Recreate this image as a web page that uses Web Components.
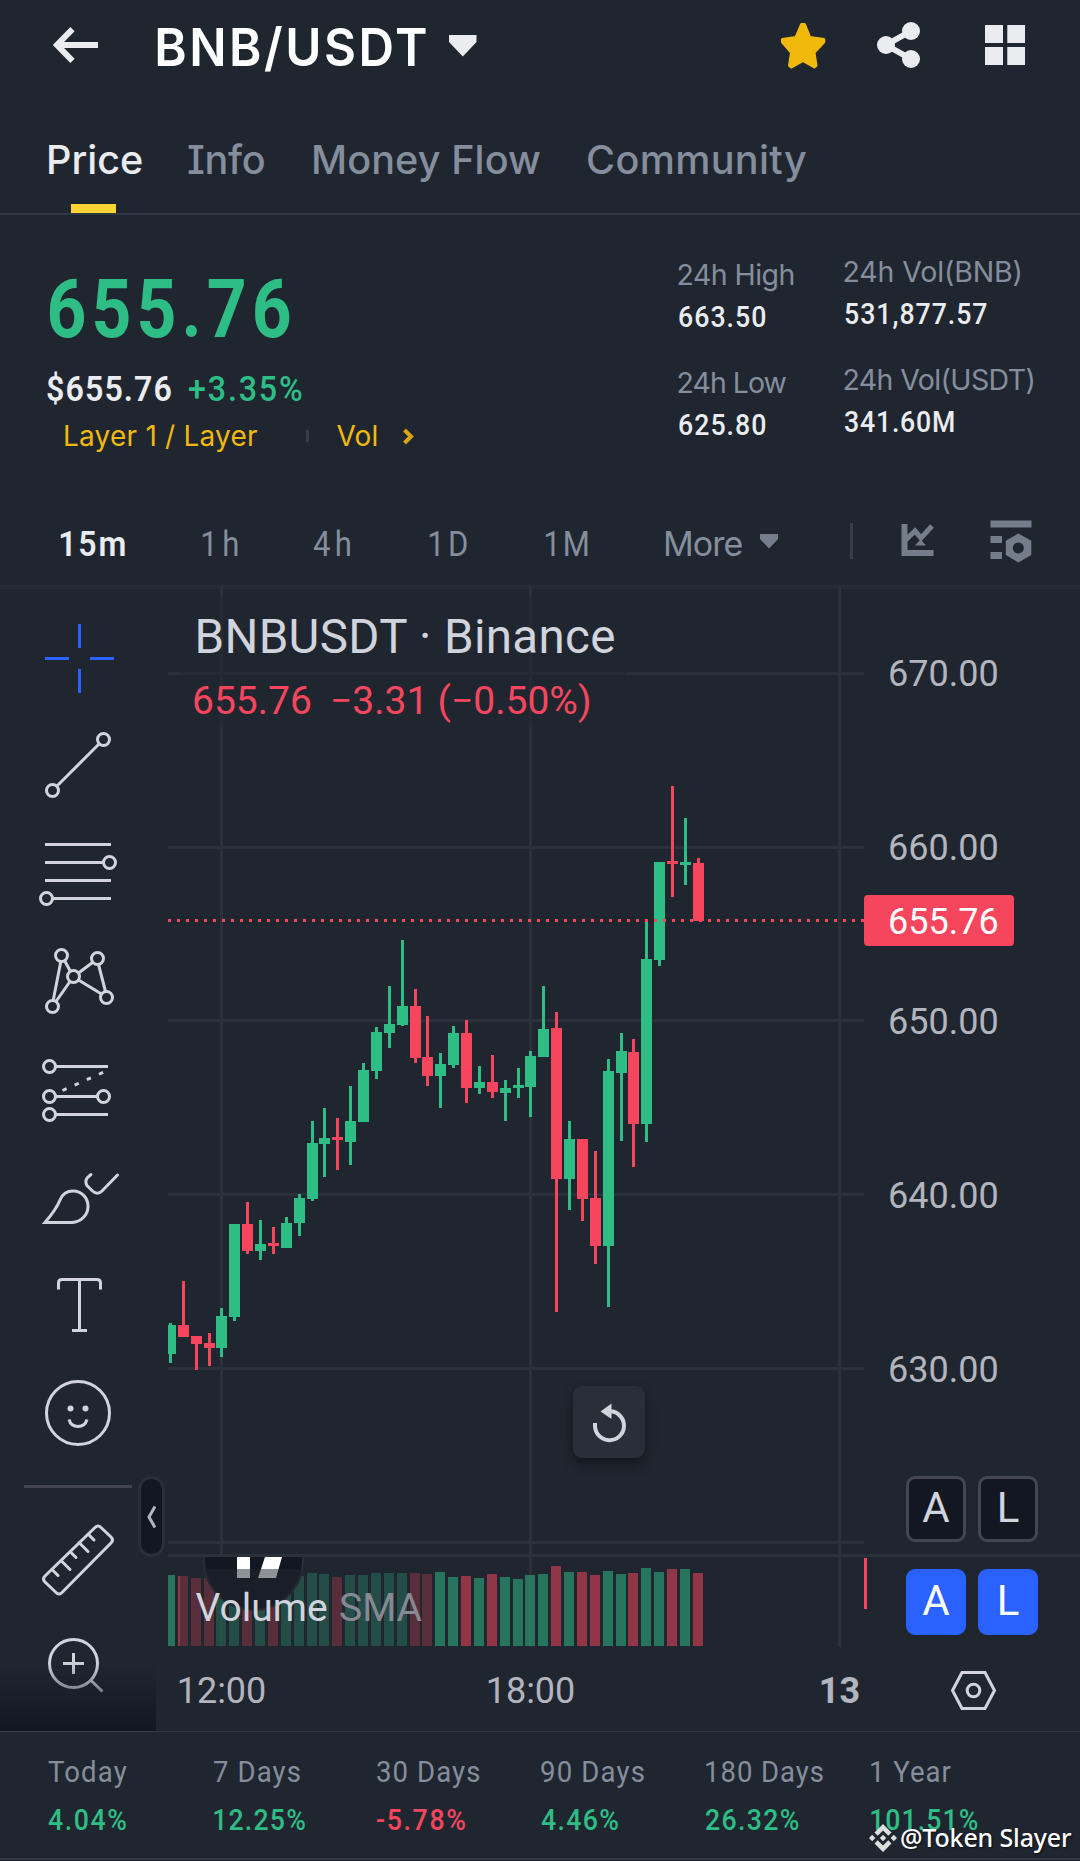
<!DOCTYPE html>
<html lang="en">
<head>
<meta charset="utf-8">
<title>BNB/USDT</title>
<style>
html,body{margin:0;padding:0;background:#202630}
body{width:1080px;height:1861px;overflow:hidden;font-family:Inter,"Noto Sans",sans-serif;color:#eaecef}
</style>
</head>
<body>
<trading-page></trading-page>
<script>
const ctx = document.createElement('canvas').getContext('2d');

/* A single line of text whose ink spans exactly `w` pixels; `sx` condenses the glyphs. */
class FitText extends HTMLElement {
  connectedCallback() {
    if (this.shadowRoot) return;
    const root = this.attachShadow({mode: 'open'});
    root.innerHTML = `<style>:host{display:block;flex:none;white-space:pre}
      span{display:inline-block;transform-origin:0 50%}</style><span><slot></slot></span>`;
    const w = +this.getAttribute('w'), sx = +(this.getAttribute('sx') || 1);
    const cs = getComputedStyle(this), text = this.textContent;
    ctx.font = `${cs.fontWeight} ${cs.fontSize} ${cs.fontFamily}`;
    const m = ctx.measureText(text);
    const ink = m.actualBoundingBoxLeft + m.actualBoundingBoxRight;
    const span = root.querySelector('span');
    this.style.width = w + 'px';
    span.style.letterSpacing = ((w / sx - ink) / Math.max(1, text.length - 1)) + 'px';
    span.style.transform = `translateX(${m.actualBoundingBoxLeft * sx}px) scaleX(${sx})`;
  }
}
customElements.define('fit-text', FitText);

const define = (name, html) => customElements.define(name, class extends HTMLElement {
  connectedCallback() {
    if (this.shadowRoot) return;
    const t = document.createElement('template');
    t.innerHTML = html;
    this.attachShadow({mode: 'open'}).appendChild(t.content.cloneNode(true));
  }
});

define('app-header', `
<style>
:host{display:flex;align-items:center;height:94px;box-sizing:border-box;padding:0 55px 0 52px}
svg{display:block;flex:none}
fit-text{font-size:52.3px;font-weight:600;line-height:94px;color:#fff;margin-left:58px}
.caret{margin:0 auto 2px 23px}
.share{margin:0 64px 5px 51px}
.grid,.star,.back{margin-bottom:5px}
</style>
<svg class="back" width="47" height="40" viewBox="52 25 47 40" fill="none" stroke="#eaecef" stroke-width="6"><path d="M98 45H58M72.5 29.2L57 45L72.5 60.8"/></svg>
<fit-text w="269" sx=".94">BNB/USDT</fit-text>
<svg class="caret" width="28" height="22" viewBox="449.500 35 28 22" fill="#eaecef"><path d="M449.500 35h27.500v7l-13.700 14.500l-13.800-14.500z"/></svg>
<svg class="star" width="46" height="48" viewBox="780 21 46 48" fill="#f0b90b" stroke="#f0b90b" stroke-width="3" stroke-linejoin="round"><path d="M801.500 24.500h3L809.800 37.500L823.800 39.500V42L814 52.500L816 65.500L814.500 67L803 60.500L791.500 67L789.500 65.500L791.500 52.500L782.500 42V39.500L796 37.500Z"/></svg>
<svg class="share" width="44" height="48" viewBox="877 21 44 48" fill="#eaecef"><circle cx="886" cy="45" r="9"/><circle cx="911" cy="31" r="9"/><circle cx="911" cy="59" r="9"/><path d="M911 31L886 45L911 59" fill="none" stroke="#eaecef" stroke-width="6"/></svg>
<svg class="grid" width="40" height="40" fill="#eaecef"><path d="M0 0h18v18H0zM22.300 0h17.700v18H22.300zM0 22h18v18H0zM22.300 22h17.700v18H22.300z"/></svg>
`);

define('page-tabs', `
<style>
:host{display:flex;gap:48px;height:121px;box-sizing:border-box;padding:46px 0 0 49px;border-bottom:2px solid #323843}
.tab{font-size:39.6px;font-weight:500;line-height:40px;color:#848e9c;height:73px;display:flex;flex-direction:column;align-items:center;justify-content:space-between}
.on{color:#eaecef}
.on::after{content:"";width:45px;height:9px;background:#fcd535;margin-right:4px}
.info{font-feature-settings:"cv08";margin-right:8.500px}
</style>
<div class="tab on"><fit-text w="93">Price</fit-text></div>
<div class="tab info"><fit-text w="67.500">Info</fit-text></div>
<div class="tab"><fit-text w="226">Money Flow</fit-text></div>
<div class="tab"><fit-text w="218">Community</fit-text></div>
`);

define('stat-item', `
<style>
:host{display:flex;flex-direction:column;line-height:42px;height:108px}
::slotted(*){display:block}
.l{color:#848e9c;font-size:28.500px}
.v{color:#eaecef;font:500 29px/42px Roboto,sans-serif}
</style>
<div class="l"><slot name="label"></slot></div><div class="v"><slot></slot></div>
`);

define('price-summary', `
<style>
:host{display:flex;height:285px;box-sizing:border-box;padding-top:34px}
.left{width:631px;padding-left:48px;box-sizing:border-box}
.big{font:700 82px/121px Roboto,sans-serif;color:#2ebd85;padding-left:2px}
.row{display:flex;align-items:center}
.usd{font:600 35px/39px Roboto,sans-serif;gap:18px;margin-left:-1px}
.up{color:#2ebd85;font-weight:500}
.tags{font-size:28px;line-height:54px;color:#f0b90b;padding-left:17px}
.tags i{width:3px;height:12px;background:#363c48;margin:0 28px 0 48.500px}
.tags svg{margin-left:26px}
.c1{padding:4.500px 0 0 47.500px;width:213.500px;box-sizing:border-box}
.c2{padding:1.500px 0 0}
</style>
<div class="left">
 <div class="big"><fit-text w="240" sx=".85">655.76</fit-text></div>
 <div class="row usd"><fit-text w="124" sx=".92">$655.76</fit-text><fit-text class="up" w="113" sx=".92">+3.35%</fit-text></div>
 <div class="row tags"><fit-text w="192">Layer 1 / Layer</fit-text><i></i><fit-text w="40">Vol</fit-text>
 <svg width="12" height="17" fill="none" stroke="#d9a513" stroke-width="4"><path d="M1.500 2L8 8.500L1.500 15"/></svg></div>
</div>
<div class="c1">
 <stat-item><fit-text slot="label" w="115">24h High</fit-text><fit-text w="86" sx=".92">663.50</fit-text></stat-item>
 <stat-item><fit-text slot="label" w="108">24h Low</fit-text><fit-text w="86" sx=".92">625.80</fit-text></stat-item>
</div>
<div class="c2">
 <stat-item><fit-text slot="label" w="176">24h Vol(BNB)</fit-text><fit-text w="142" sx=".92">531,877.57</fit-text></stat-item>
 <stat-item><fit-text slot="label" w="189">24h Vol(USDT)</fit-text><fit-text w="109" sx=".92">341.60M</fit-text></stat-item>
</div>
`);

define('interval-bar', `
<style>
:host{display:flex;align-items:center;height:85px;box-sizing:border-box;padding:3px 48px 0 59.500px;font:400 34.500px/82px Roboto,sans-serif;color:#848e9c}
.list{display:flex;gap:77.500px;flex:none}
.on{color:#eaecef;font-weight:600}
.h4{margin:0 1.500px 0 -1.500px}
.more{display:flex;align-items:center;gap:17px;font:400 34px/82px Inter,sans-serif}
i{width:3px;height:36px;background:#363c48;margin:0 auto 6px 72px}
svg{flex:none;display:block;margin-bottom:6px}
</style>
<div class="list"><fit-text class="on" w="64.500" sx=".93">15m</fit-text><fit-text w="35.500" sx=".9">1h</fit-text><fit-text class="h4" w="37" sx=".9">4h</fit-text><fit-text w="38" sx=".9">1D</fit-text><fit-text w="43" sx=".9">1M</fit-text>
<div class="more"><fit-text w="77.500">More</fit-text><svg width="18" height="15" fill="#767d8a"><path d="M0 0h18v5L9 14.500L0 5z"/></svg></div></div>
<i></i>
<svg style="margin:0 56px 8px 0" width="33" height="33" viewBox="901.500 524 33 33" fill="none" stroke="#767d8a"><path d="M905 524v29h29" stroke-width="6"/><path d="M904 542L915.500 531L921.500 538L932.500 526" stroke-width="5"/><path d="M915.500 545.500l5.500-6l5.500 6z" fill="#767d8a" stroke="none"/></svg>
<svg width="42" height="43" viewBox="990.500 520 42 43" fill="#767d8a"><path d="M991 520.500h41v7h-41zM991 536h11.500v7H991zM991 552h11.500v7H991z"/><path fill-rule="evenodd" d="M1018.800 533.500l13 7.200v14.200l-13 7.500l-12.500-7.500v-14.200zM1018.800 542.500a5.500 5.500 0 1 0 .01 0z"/></svg>
`);

define('draw-toolbar', `
<style>
:host{display:flex;flex-direction:column;position:relative;width:156px;height:1146px;padding-top:4px;box-sizing:border-box}
svg{display:block;flex:none;fill:none;stroke:#d1d4dc;stroke-width:3}
hr{border:0;margin:15px 24px 12px;height:3px;background:#434651;width:108px;flex:none}
.fade{position:absolute;left:0;bottom:0;width:156px;height:70px;background:linear-gradient(#13172200,#131722)}
</style>
<svg width="156" height="123" viewBox="0 589 156 123" style="stroke:#2962ff"><path d="M79.500 624v24M79.500 669v24M45 658.500h24M90 658.500h24"/></svg>
<svg width="156" height="106" viewBox="0 712 156 106"><circle cx="103.500" cy="739.500" r="6"/><circle cx="52.500" cy="790.500" r="6"/><path d="M99 744L57 786"/></svg>
<svg width="156" height="108" viewBox="0 818 156 108"><path d="M45 844.500h66M45 862.500h58M45 880.500h66M53 898.500h58"/><circle cx="109.500" cy="862.500" r="6"/><circle cx="46.500" cy="898.500" r="6"/></svg>
<svg width="156" height="109" viewBox="0 926 156 109"><circle cx="61.500" cy="955.500" r="6"/><circle cx="97.500" cy="958.500" r="6"/><circle cx="73.500" cy="976.500" r="6"/><circle cx="52.500" cy="1006.500" r="6"/><circle cx="106.500" cy="997.500" r="6"/><path d="M60.800 961.500L53.200 1000.500M64.500 960.500L70.500 971.500M70 981.500L56 1001.500M78.500 973L92.500 962.500M78.500 980L101.500 994M98.500 964.500L105.500 991.500"/></svg>
<svg width="156" height="110" viewBox="0 1035 156 110"><circle cx="49.500" cy="1066.500" r="6"/><circle cx="49.500" cy="1096.500" r="6"/><circle cx="103.500" cy="1096.500" r="6"/><circle cx="49.500" cy="1114.500" r="6"/><path d="M56 1066.500h52M56 1096.500h41M56 1114.500h52"/><path d="M62.500 1090.500L104 1072" stroke-dasharray="4.500 8.800"/></svg>
<svg width="156" height="105" viewBox="0 1145 156 105" stroke-linecap="round"><path d="M45 1222.500H72C81.500 1222 88 1214.500 88 1206.500C88 1197.500 81.500 1191 73 1191C66 1191 62 1195 60 1200C57 1207.500 51 1215.500 45 1222.500Z"/><path d="M91 1174.500L87.500 1177.500Q84.500 1181 87 1185.500L92.500 1191Q97.500 1195.500 102 1191L117.500 1175"/></svg>
<svg width="156" height="110" viewBox="0 1250 156 110"><path d="M58.500 1289.500V1283Q58.500 1279.500 62 1279.500H97Q100.500 1279.500 100.500 1283V1289.500M79.500 1279.500V1330.500M72 1330.500H87"/></svg>
<svg width="156" height="110" viewBox="0 1360 156 110"><circle cx="78" cy="1413" r="31.500"/><path d="M69 1419.500Q71 1426.500 78 1426.500Q85 1426.500 87 1419.500"/><g fill="#d1d4dc" stroke="none"><circle cx="70.500" cy="1408.500" r="3"/><circle cx="85.500" cy="1408.500" r="3"/></g></svg>
<hr>
<svg width="156" height="110" viewBox="0 1500 156 110" stroke-linecap="round"><path d="M95 1527.500Q98 1524.500 101 1527.500L111 1537Q114 1540 111 1543L62 1592.500Q59 1595.500 56 1592.500L45 1582Q42 1579 45 1576ZM52 1569.500L58 1575.500M61 1560.500L70 1569.500M70 1551.500L76 1557.500M79 1542.500L88 1551.500M88 1534L94 1540"/></svg>
<svg width="156" height="121" viewBox="0 1610 156 121"><circle cx="73.500" cy="1663.500" r="24"/><path d="M63 1663.500h21M73.500 1653v21M91 1680.500L102.500 1691.500"/></svg>
<div class="fade"></div>
`);

/* [body x, up?, body top, body bottom, wick top, wick bottom, volume bar top] */
const CANDLES = [
[165,1,1325,1354,1323,1363,1575],[178,0,1325,1337,1281,1337,1576],[191,0,1336,1344,1336,1370,1578],[204,0,1343,1348,1333,1366,1578],
[216,1,1316,1348,1308,1357,1577],[229,1,1224,1317,1224,1321,1573],[242,0,1224,1251,1202,1254,1576],[255,1,1244,1251,1220,1260,1576],
[268,0,1243,1246,1227,1254,1577],[281,1,1223,1248,1217,1248,1576],[294,1,1198,1223,1194,1236,1576],[307,1,1143,1199,1121,1201,1573],
[319,1,1138,1144,1108,1177,1574],[332,0,1137,1140,1118,1170,1577],[345,1,1121,1142,1086,1165,1575],[358,1,1070,1122,1063,1122,1575],
[371,1,1032,1071,1027,1079,1573],[384,1,1024,1033,986,1048,1573],[397,1,1006,1025,940,1026,1573],[410,0,1006,1058,989,1063,1573],
[422,0,1057,1076,1016,1086,1574],[435,1,1064,1076,1053,1108,1572],[448,1,1033,1065,1026,1068,1577],[461,0,1033,1088,1020,1103,1576],
[474,1,1082,1088,1066,1094,1578],[487,0,1082,1092,1055,1098,1574],[500,1,1088,1093,1080,1121,1577],[513,1,1085,1088,1068,1098,1579],
[525,1,1056,1087,1051,1117,1575],[538,1,1029,1057,986,1057,1574],[551,0,1028,1179,1012,1312,1566],[564,1,1139,1179,1121,1210,1572],
[577,0,1139,1199,1139,1221,1572],[590,0,1198,1246,1151,1264,1575],[603,1,1071,1246,1059,1307,1571],[616,1,1051,1073,1033,1141,1574],
[628,0,1052,1124,1039,1167,1573],[641,1,959,1124,921,1142,1568],[654,1,862,960,862,966,1572],[667,0,861,864,786,897,1569],
[680,1,862,865,818,885,1569],[693,0,863,921,858,921,1573]];

class PriceChart extends HTMLElement {
  connectedCallback() {
    if (this.shadowRoot) return;
    const col = up => up ? '#2ebd85' : '#f6465d';
    const candles = CANDLES.map(([x, up, t, b, wt, wb]) =>
      `<g fill="${col(up)}"><rect x="${x + 4}" y="${wt}" width="3" height="${wb - wt}"/><rect x="${x}" y="${t}" width="11" height="${b - t}"/></g>`).join('');
    const bars = CANDLES.map(([x, up, , , , , v]) =>
      `<rect x="${x}" y="${v}" width="10" height="${1646 - v}" fill="${col(up)}"/>`).join('');
    const rows = [673.5, 847.5, 1020.5, 1194.5, 1368.5, 1542.5];
    const prices = [['670.00', 686], ['660.00', 860], ['650.00', 1034], ['640.00', 1208], ['630.00', 1382]];
    this.attachShadow({mode: 'open'}).innerHTML = `
<style>
:host{display:block;width:924px;height:1146px;font-family:Roboto,sans-serif}
svg{display:block;shape-rendering:crispEdges}
.s{shape-rendering:auto}
.axis{font-size:36px;fill:#b2b5be}
</style>
<svg width="924" height="1146" viewBox="156 585 924 1146">
<defs><clipPath id="plot"><rect x="168" y="585" width="696" height="1146"/></clipPath><clipPath id="vol"><rect x="168" y="1557" width="696" height="100"/></clipPath></defs>
<rect x="156" y="585" width="924" height="4" fill="#262b35"/>
<g fill="#2b303a">${rows.map(y => `<rect x="168" y="${Math.round(y - 1.5)}" width="696" height="3"/>`).join('')}
${[220, 529, 838].map(x => `<rect x="${x}" y="586" width="3" height="968"/><rect x="${x}" y="1557" width="3" height="90"/>`).join('')}
<rect x="168" y="1554" width="912" height="3"/></g>
<g clip-path="url(#plot)">${candles}<g opacity=".52">${bars}</g></g>
<path d="M168 920.5H864" stroke="#f6465d" stroke-width="3" stroke-dasharray="3 6"/>
<g clip-path="url(#vol)" class="s"><circle cx="253.500" cy="1560.500" r="49.500" fill="#131722" stroke="#2a2e39" stroke-width="2"/><path fill="#fff" d="M237 1557h13v21h-13zM265 1557h17l-6 21h-18z"/></g>
<rect x="180" y="597" width="447" height="130" fill="#202630" opacity=".5"/>
<rect x="180" y="1569" width="254" height="78" fill="#202630" opacity=".5"/>
<text x="194.500" y="652.700" font-size="47.500" fill="#d1d4dc" textLength="421">BNBUSDT · Binance</text>
<g font-size="39" fill="#f6465d"><text x="192" y="713.700">655.76</text><text x="330" y="713.700">−3.31</text><text x="437.500" y="713.700" textLength="154">(−0.50%)</text></g>
<text x="195.500" y="1620.500" font-size="39" fill="#d1d4dc">Volume</text><text x="339" y="1620.500" font-size="39" fill="#868993">SMA</text>
<g class="axis">${prices.map(([p, y]) => `<text x="888" y="${y}">${p}</text>`).join('')}
<text x="221.500" y="1702.700" text-anchor="middle">12:00</text><text x="530.500" y="1702.700" text-anchor="middle">18:00</text><text x="839.500" y="1702.700" text-anchor="middle" font-weight="700">13</text></g>
<rect class="s" x="864" y="895" width="150" height="51" rx="4" fill="#f6465d"/><text x="888" y="933.500" font-size="36" fill="#fff">655.76</text>
<rect x="864" y="1558" width="3" height="51" fill="#f6465d"/>
<g class="s" fill="none" stroke="#d1d4dc" stroke-width="3"><path d="M952.500 1690.500L962 1672.500H985L994.500 1690.500L985 1708.500H962Z"/><circle cx="973.500" cy="1690.500" r="6.300"/></g>
</svg>`;
  }
}
customElements.define('price-chart', PriceChart);

define('scale-button', `
<style>
:host{display:flex;align-items:center;justify-content:center;width:60px;height:66px;box-sizing:border-box;border:3px solid #434651;border-radius:9px;background:#131722;color:#d1d4dc;font:400 42px/60px Roboto,sans-serif;padding-bottom:3px}
:host([on]){background:#2962ff;border-color:#2962ff;color:#fff}
</style><slot></slot>`);

define('chart-panel', `
<style>
:host{display:flex;position:relative;height:1146px}
.top{position:absolute;left:0;top:0;width:156px;height:4px;background:#262b35}
.scale{position:absolute;left:906px;display:flex;gap:12px}
.handle{position:absolute;left:138px;top:891px;width:27px;height:81px;box-sizing:border-box;border:3px solid #2a2e39;border-radius:14px;background:#131722;display:flex;align-items:center;justify-content:center}
.handle svg{margin-right:1px}
.reset{position:absolute;left:573px;top:801px;width:72px;height:72px;border-radius:9px;background:#2a2e39;box-shadow:0 6px 12px rgba(0,0,0,.4)}
svg{display:block}
</style>
<draw-toolbar></draw-toolbar><price-chart></price-chart>
<div class="top"></div>
<div class="handle"><svg width="9" height="24" fill="none" stroke="#b2b5be" stroke-width="3"><path d="M8 1.500L2 12L8 22.500"/></svg></div>
<div class="reset"><svg width="72" height="72" viewBox="573 1386 72 72"><path d="M595 1423V1426A14.500 14.500 0 1 0 611 1411.300" fill="none" stroke="#d1d4dc" stroke-width="4"/><path d="M600.500 1411.500L611.500 1403.500V1419Z" fill="#d1d4dc"/></svg></div>
<div class="scale" style="top:891px"><scale-button>A</scale-button><scale-button>L</scale-button></div>
<div class="scale" style="top:984px"><scale-button on>A</scale-button><scale-button on>L</scale-button></div>
`);

define('performance-bar', `
<style>
:host{display:grid;grid-template-columns:166px 163px 164px 165px 165px 1fr;height:129px;box-sizing:border-box;border-top:1px solid #363c47;border-bottom:2px solid #323843;padding:16px 0 0 48px;font:400 29px/48px Roboto,sans-serif;color:#848e9c}
b{display:block;font-weight:500;color:#2ebd85}
.dn{color:#f6465d}
</style>
<div><fit-text w="79" sx=".95">Today</fit-text><b><fit-text w="78.500" sx=".92">4.04%</fit-text></b></div>
<div><fit-text w="86" sx=".95">7 Days</fit-text><b><fit-text w="91.500" sx=".92">12.25%</fit-text></b></div>
<div><fit-text w="102.500" sx=".95">30 Days</fit-text><b class="dn"><fit-text w="88.500" sx=".92">-5.78%</fit-text></b></div>
<div><fit-text w="103" sx=".95">90 Days</fit-text><b><fit-text w="77.500" sx=".92">4.46%</fit-text></b></div>
<div><fit-text w="117" sx=".95">180 Days</fit-text><b><fit-text w="93" sx=".92">26.32%</fit-text></b></div>
<div><fit-text w="80" sx=".95">1 Year</fit-text><b><fit-text w="107" sx=".92">101.51%</fit-text></b></div>
`);

define('author-mark', `
<style>
:host{position:absolute;right:8px;bottom:6px;display:flex;align-items:center;gap:4px;font:500 25px/36px "Noto Sans",sans-serif;color:#fff;text-shadow:1px 1px 2px #000a}
svg{display:block}
fit-text{margin-top:-2px}
</style>
<svg width="28" height="28" viewBox="0 0 28 28" fill="#dcdee0"><path d="M14 0L22.500 8.500L19.300 11.700L14 6.400L8.700 11.700L5.500 8.500ZM14 28L5.500 19.500L8.700 16.300L14 21.600L19.300 16.300L22.500 19.500ZM14 10.800L17.200 14L14 17.200L10.800 14ZM3.200 10.800L6.400 14L3.200 17.200L0 14ZM24.800 10.800L28 14L24.800 17.200L21.600 14Z"/></svg>
<fit-text w="171">@Token Slayer</fit-text>
`);

define('trading-page', `
<style>:host{display:flex;flex-direction:column;position:relative;width:1080px;height:1861px;background:#202630}
:host>*{flex:none}</style>
<app-header></app-header><page-tabs></page-tabs><price-summary></price-summary><interval-bar></interval-bar>
<chart-panel></chart-panel><performance-bar></performance-bar><author-mark></author-mark>
`);
</script>
</body>
</html>
